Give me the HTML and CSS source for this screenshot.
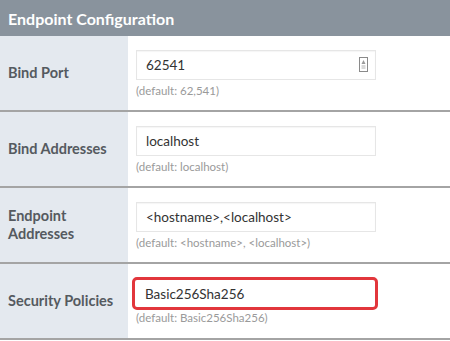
FILE: index.html
```html
<!DOCTYPE html>
<html lang="en">
<head>
  <meta charset="UTF-8">
  <title>Endpoint Configuration</title>
  <link rel="stylesheet" href="styles.css">
</head>
<body>
  <div class="panel">
    <div class="panel-header">Endpoint Configuration</div>

    <div class="form-row">
      <div class="form-label">Bind Port</div>
      <div class="form-value">
        <div class="field">
          <span class="field-text">62541</span>
          <svg class="spinner" width="9" height="15" viewBox="0 0 9 15">
            <rect x="0.5" y="0.5" width="8" height="14" fill="#fff" stroke="#8a8a8a"/>
            <path d="M4.5 3 L6.5 7 L2.5 7 Z" fill="#9a9a9a"/>
            <path d="M2.5 9 H6.5 M2.5 11 H6.5" stroke="#b0b0b0"/>
          </svg>
        </div>
        <div class="hint">(default: 62,541)</div>
      </div>
    </div>

    <div class="form-row">
      <div class="form-label">Bind Addresses</div>
      <div class="form-value">
        <div class="field"><span class="field-text">localhost</span></div>
        <div class="hint">(default: localhost)</div>
      </div>
    </div>

    <div class="form-row">
      <div class="form-label">Endpoint<br>Addresses</div>
      <div class="form-value">
        <div class="field"><span class="field-text">&lt;hostname&gt;,&lt;localhost&gt;</span></div>
        <div class="hint">(default: &lt;hostname&gt;, &lt;localhost&gt;)</div>
      </div>
    </div>

    <div class="form-row">
      <div class="form-label">Security Policies</div>
      <div class="form-value">
        <div class="field field-highlight"><span class="field-text">Basic256Sha256</span></div>
        <div class="hint">(default: Basic256Sha256)</div>
      </div>
    </div>
  </div>
</body>
</html>
```

FILE: styles.css
```css
:root {
  --header-bg: #89939d;
  --label-bg: #e4e9ef;
  --label-text: #555a60;
  --text-main: #333;
  --text-hint: #9a9a9a;
  --line: #a4a4a4;
  --highlight: #e2363c;
}

* {
  box-sizing: border-box;
  margin: 0;
  padding: 0;
}

body {
  font-family: Lato, "Open Sans", sans-serif;
  background: #fff;
  color: var(--text-main);
}

.panel {
  width: 450px;
}

.panel-header {
  height: 36px;
  padding: 0 8px;
  display: flex;
  align-items: center;
  background-color: var(--header-bg);
  color: #fff;
  font-size: 16px;
  font-weight: 700;
}

.form-row {
  display: grid;
  grid-template-columns: 128px 1fr;
  height: 76px;
  border-bottom: 2px solid var(--line);
}

.form-row:first-of-type {
  height: 75px;
}

.form-label {
  display: flex;
  align-items: center;
  padding-left: 8px;
  background-color: var(--label-bg);
  color: var(--label-text);
  font-size: 14.5px;
  font-weight: 700;
  line-height: 18px;
}

.form-value {
  padding: 14px 0 0 8px;
}

.field {
  position: relative;
  width: 240px;
  height: 30px;
  display: flex;
  align-items: center;
  padding-left: 9px;
  border: 1px solid #e6e6e6;
  box-shadow: inset 0 1px 1px rgba(0, 0, 0, 0.04);
  font-size: 13.5px;
  color: var(--text-main);
}

.field-highlight {
  width: 246px;
  height: 33px;
  margin: -1px 0 -3px -4px;
  padding-left: 10px;
  border: 3px solid var(--highlight);
  border-radius: 5px;
  box-shadow: none;
}

.spinner {
  position: absolute;
  right: 7px;
  top: 6px;
}

.hint {
  margin-top: 4px;
  font-size: 11.5px;
  color: var(--text-hint);
}
```
